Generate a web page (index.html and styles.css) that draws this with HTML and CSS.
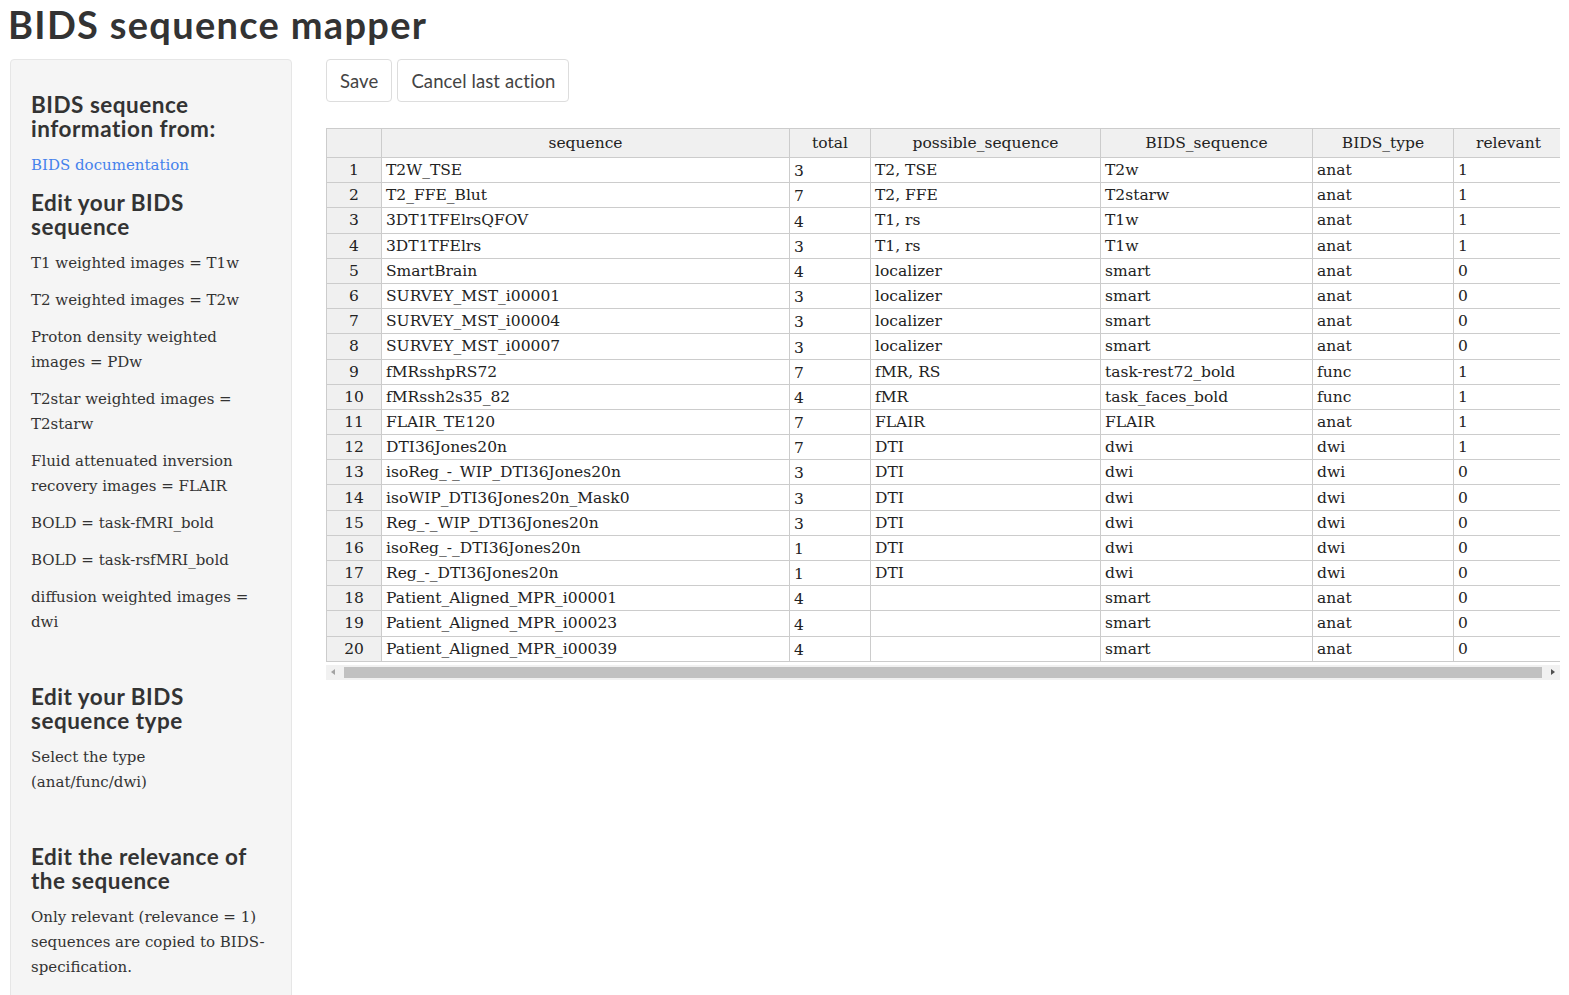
FILE: index.html
```html
<!DOCTYPE html>
<html lang="en">
<head>
<meta charset="utf-8">
<title>BIDS sequence mapper</title>
<link rel="stylesheet" href="styles.css">
</head>
<body>
<div class="page">
  <h1 class="title">BIDS sequence mapper</h1>
  <div class="layout">
    <aside class="well">
      <h3 class="side-h">BIDS sequence information from:</h3>
      <p class="side-p link-p"><a href="#" class="link">BIDS documentation</a></p>
      <h3 class="side-h">Edit your BIDS sequence</h3>
      <p class="side-p">T1 weighted images = T1w</p>
      <p class="side-p">T2 weighted images = T2w</p>
      <p class="side-p">Proton density weighted images = PDw</p>
      <p class="side-p">T2star weighted images = T2starw</p>
      <p class="side-p">Fluid attenuated inversion recovery images = FLAIR</p>
      <p class="side-p">BOLD = task-fMRI_bold</p>
      <p class="side-p">BOLD = task-rsfMRI_bold</p>
      <p class="side-p">diffusion weighted images = dwi</p>
      <h3 class="side-h sec">Edit your BIDS sequence type</h3>
      <p class="side-p">Select the type<br>(anat/func/dwi)</p>
      <h3 class="side-h sec">Edit the relevance of the sequence</h3>
      <p class="side-p">Only relevant (relevance = 1) sequences are copied to BIDS-specification.</p>
    </aside>
    <main class="main">
      <div class="toolbar">
        <button class="btn">Save</button>
        <button class="btn">Cancel last action</button>
      </div>
      <div class="grid-wrap">
        <div class="grid-clip">
          <table class="grid">
            <colgroup>
              <col class="c-num"><col class="c-seq"><col class="c-tot"><col class="c-pos"><col class="c-bseq"><col class="c-btype"><col class="c-rel">
            </colgroup>
            <thead>
              <tr><th></th><th>sequence</th><th>total</th><th>possible_sequence</th><th>BIDS_sequence</th><th>BIDS_type</th><th>relevant</th></tr>
            </thead>
            <tbody>
              <tr><th>1</th><td>T2W_TSE</td><td class="num">3</td><td>T2, TSE</td><td>T2w</td><td>anat</td><td>1</td></tr>
              <tr><th>2</th><td>T2_FFE_Blut</td><td class="num">7</td><td>T2, FFE</td><td>T2starw</td><td>anat</td><td>1</td></tr>
              <tr><th>3</th><td>3DT1TFElrsQFOV</td><td class="num">4</td><td>T1, rs</td><td>T1w</td><td>anat</td><td>1</td></tr>
              <tr><th>4</th><td>3DT1TFElrs</td><td class="num">3</td><td>T1, rs</td><td>T1w</td><td>anat</td><td>1</td></tr>
              <tr><th>5</th><td>SmartBrain</td><td class="num">4</td><td>localizer</td><td>smart</td><td>anat</td><td>0</td></tr>
              <tr><th>6</th><td>SURVEY_MST_i00001</td><td class="num">3</td><td>localizer</td><td>smart</td><td>anat</td><td>0</td></tr>
              <tr><th>7</th><td>SURVEY_MST_i00004</td><td class="num">3</td><td>localizer</td><td>smart</td><td>anat</td><td>0</td></tr>
              <tr><th>8</th><td>SURVEY_MST_i00007</td><td class="num">3</td><td>localizer</td><td>smart</td><td>anat</td><td>0</td></tr>
              <tr><th>9</th><td>fMRsshpRS72</td><td class="num">7</td><td>fMR, RS</td><td>task-rest72_bold</td><td>func</td><td>1</td></tr>
              <tr><th>10</th><td>fMRssh2s35_82</td><td class="num">4</td><td>fMR</td><td>task_faces_bold</td><td>func</td><td>1</td></tr>
              <tr><th>11</th><td>FLAIR_TE120</td><td class="num">7</td><td>FLAIR</td><td>FLAIR</td><td>anat</td><td>1</td></tr>
              <tr><th>12</th><td>DTI36Jones20n</td><td class="num">7</td><td>DTI</td><td>dwi</td><td>dwi</td><td>1</td></tr>
              <tr><th>13</th><td>isoReg_-_WIP_DTI36Jones20n</td><td class="num">3</td><td>DTI</td><td>dwi</td><td>dwi</td><td>0</td></tr>
              <tr><th>14</th><td>isoWIP_DTI36Jones20n_Mask0</td><td class="num">3</td><td>DTI</td><td>dwi</td><td>dwi</td><td>0</td></tr>
              <tr><th>15</th><td>Reg_-_WIP_DTI36Jones20n</td><td class="num">3</td><td>DTI</td><td>dwi</td><td>dwi</td><td>0</td></tr>
              <tr><th>16</th><td>isoReg_-_DTI36Jones20n</td><td class="num">1</td><td>DTI</td><td>dwi</td><td>dwi</td><td>0</td></tr>
              <tr><th>17</th><td>Reg_-_DTI36Jones20n</td><td class="num">1</td><td>DTI</td><td>dwi</td><td>dwi</td><td>0</td></tr>
              <tr><th>18</th><td>Patient_Aligned_MPR_i00001</td><td class="num">4</td><td></td><td>smart</td><td>anat</td><td>0</td></tr>
              <tr><th>19</th><td>Patient_Aligned_MPR_i00023</td><td class="num">4</td><td></td><td>smart</td><td>anat</td><td>0</td></tr>
              <tr><th>20</th><td>Patient_Aligned_MPR_i00039</td><td class="num">4</td><td></td><td>smart</td><td>anat</td><td>0</td></tr>
            </tbody>
          </table>
        </div>
        <div class="hscroll">
          <span class="arrow arrow-left"></span>
          <span class="thumb"></span>
          <span class="arrow arrow-right"></span>
        </div>
      </div>
    </main>
  </div>
</div>
</body>
</html>
```

FILE: styles.css
```css
html, body {
  margin: 0;
  padding: 0;
  background: #ffffff;
}

body {
  font-family: "DejaVu Serif", "Liberation Serif", serif;
  color: #333333;
  font-size: 16px;
}

.page {
  padding: 0 9px 0 8px;
}

.title {
  font-family: Lato, "Open Sans", sans-serif;
  font-weight: 700;
  font-size: 38px;
  line-height: 48px;
  margin: 0 0 11px 0;
  color: #333333;
  letter-spacing: 1.3px;
}

.layout {
  display: grid;
  grid-template-columns: 284px 1fr;
  column-gap: 34px;
  align-items: start;
}

.well {
  margin-left: 2px;
  background: #f5f5f5;
  border: 1px solid #e6e6e6;
  border-radius: 4px;
  padding: 33px 20px 19px 20px;
  min-height: 960px;
}

.side-h {
  font-family: Lato, "Open Sans", sans-serif;
  font-weight: 700;
  font-size: 22.5px;
  line-height: 24px;
  letter-spacing: 0.5px;
  margin: 0 0 12px 0;
  color: #333333;
}

.side-h.sec {
  margin-top: 50px;
}

.side-p {
  font-size: 15px;
  line-height: 25px;
  margin: 0 0 12px 0;
  color: #333333;
}

.link-p {
  margin-bottom: 13px;
}

.link {
  color: #4582ec;
  text-decoration: none;
}

.main {
  min-width: 0;
}

.toolbar {
  display: flex;
  gap: 5px;
  margin-bottom: 26px;
}

.btn {
  font-family: Lato, "Open Sans", sans-serif;
  font-weight: 400;
  font-size: 18.5px;
  letter-spacing: 0.1px;
  color: #444444;
  background: #ffffff;
  border: 1px solid #dddddd;
  border-radius: 4px;
  height: 43px;
  padding: 0 13px;
}

.grid-wrap {
  width: 1234px;
}

.grid-clip {
  overflow: hidden;
}

.grid {
  border-collapse: collapse;
  table-layout: fixed;
  width: 1237px;
  font-size: 15.5px;
  color: #222222;
}

.c-num { width: 55px; }
.c-seq { width: 408px; }
.c-tot { width: 81px; }
.c-pos { width: 230px; }
.c-bseq { width: 212px; }
.c-btype { width: 141px; }
.c-rel { width: 110px; }

.grid th,
.grid td {
  border: 1px solid #cccccc;
  padding: 0 4px;
  height: 24.2px;
  line-height: 22px;
  white-space: nowrap;
  overflow: hidden;
  text-align: left;
  font-weight: 400;
  vertical-align: middle;
}

.grid thead th {
  background: #f0f0f0;
  text-align: center;
  height: 28px;
}

.grid tbody th {
  background: #f0f0f0;
  text-align: center;
}

.grid td.num {
  vertical-align: bottom;
}

.hscroll {
  margin-top: 3px;
  height: 15px;
  background: #f1f1f1;
  display: flex;
  align-items: center;
}

.arrow {
  width: 16px;
  height: 15px;
  position: relative;
}

.arrow-left::before,
.arrow-right::before {
  content: "";
  position: absolute;
  top: 4px;
  border-top: 3.5px solid transparent;
  border-bottom: 3.5px solid transparent;
}

.arrow-left::before {
  left: 5px;
  border-right: 4px solid #a3a3a3;
}

.arrow-right::before {
  left: 7px;
  border-left: 4px solid #505050;
}

.thumb {
  flex: 1;
  height: 11px;
  background: #c1c1c1;
  margin: 0 2px;
}
```
